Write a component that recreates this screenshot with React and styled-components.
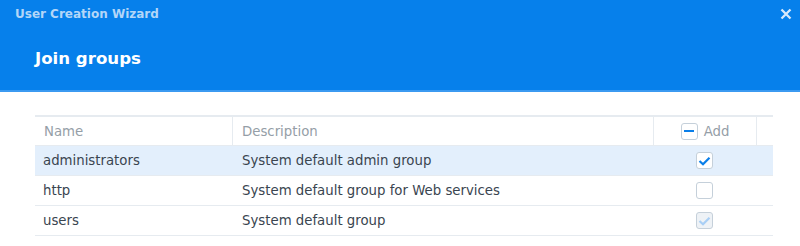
import styled, { createGlobalStyle } from "styled-components";

const GlobalStyle = createGlobalStyle`
  body {
    margin: 0;
    background: #fff;
    font-family: "DejaVu Sans", Verdana, sans-serif;
  }
`;

const groups = [
  { name: "administrators", desc: "System default admin group", state: "checked", selected: true },
  { name: "http", desc: "System default group for Web services", state: "empty" },
  { name: "users", desc: "System default group", state: "disabled" },
];

function App() {
  return (
    <>
      <GlobalStyle />
      <Window>
        <Header>
          <TitleBar>
            <WindowTitle>User Creation Wizard</WindowTitle>
            <Close aria-label="close">
              <svg width="12" height="12" viewBox="0 0 12 12">
                <path d="M1.5 1.5 L10.5 10.5 M10.5 1.5 L1.5 10.5" stroke="#d8e9fb" strokeWidth="2.3" />
              </svg>
            </Close>
          </TitleBar>
          <StepTitle>Join groups</StepTitle>
        </Header>
        <Body>
          <Table>
            <HeadRow>
              <HeadCell>Name</HeadCell>
              <HeadCell $divider>Description</HeadCell>
              <HeadCell $divider $center>
                <Box $state="mixed">
                  <Dash />
                </Box>
                Add
              </HeadCell>
              <HeadCell $divider />
            </HeadRow>
            {groups.map((g) => (
              <Row key={g.name} $selected={g.selected}>
                <Cell>{g.name}</Cell>
                <Cell>{g.desc}</Cell>
                <Cell $center>
                  <Box $state={g.state}>
                    {g.state !== "empty" && (
                      <svg width="13" height="10" viewBox="0 0 13 10">
                        <path
                          d="M1.5 5 L5 8.3 L11.5 1.7"
                          fill="none"
                          stroke={g.state === "disabled" ? "#a9cff5" : "#0a7fe9"}
                          strokeWidth="2.2"
                        />
                      </svg>
                    )}
                  </Box>
                </Cell>
                <Cell />
              </Row>
            ))}
          </Table>
        </Body>
      </Window>
    </>
  );
}

export default App;

const Window = styled.div`
  width: 800px;
  height: 246px;
  overflow: hidden;
`;

const Header = styled.header`
  height: 92px;
  box-sizing: border-box;
  background: #0680eb;
  border-bottom: 2px solid #3b9af1;
`;

const TitleBar = styled.div`
  height: 28px;
  display: flex;
  align-items: center;
  justify-content: space-between;
  padding: 0 7px 0 15px;
`;

const WindowTitle = styled.div`
  font-size: 12px;
  font-weight: bold;
  color: #b3d6f8;
`;

const Close = styled.div`
  width: 14px;
  height: 14px;
  display: flex;
  align-items: center;
  justify-content: center;
`;

const StepTitle = styled.h1`
  margin: 0;
  padding: 21px 0 0 35px;
  font-size: 16.6px;
  font-weight: bold;
  color: #fff;
  line-height: 20px;
`;

const Body = styled.main`
  padding: 23px 27px 0 35px;
`;

const Table = styled.div`
  border-top: 2px solid #e6ebf0;
`;

const cols = "197px 421px 103px 17px";

const HeadRow = styled.div`
  display: grid;
  grid-template-columns: ${cols};
  height: 28px;
`;

const HeadCell = styled.div`
  display: flex;
  align-items: center;
  justify-content: ${(p) => (p.$center ? "center" : "flex-start")};
  gap: 6px;
  padding: ${(p) => (p.$center ? "0" : "0 8px 0 9px")};
  font-size: 13.3px;
  color: #959ea7;
  border-left: ${(p) => (p.$divider ? "1px solid #e6ebf0" : "none")};
`;

const Row = styled.div`
  display: grid;
  grid-template-columns: ${cols};
  height: 29px;
  border-top: 1px solid #e6ebf0;
  background: ${(p) => (p.$selected ? "#e3effc" : "transparent")};
  &:last-child {
    border-bottom: 1px solid #e6ebf0;
  }
`;

const Cell = styled.div`
  display: flex;
  align-items: center;
  justify-content: ${(p) => (p.$center ? "center" : "flex-start")};
  padding: ${(p) => (p.$center ? "0" : "0 10px")};
  font-size: 13.3px;
  color: #3a4550;
  &:first-child {
    padding-left: 8px;
  }
`;

const Box = styled.span`
  width: 17px;
  height: 17px;
  box-sizing: border-box;
  border-radius: 3px;
  border: 1px solid #c5d0da;
  background: ${(p) => (p.$state === "disabled" ? "#eef2f6" : "#fff")};
  display: flex;
  align-items: center;
  justify-content: center;
`;

const Dash = styled.span`
  width: 10px;
  height: 2px;
  background: #0a7fe9;
`;
